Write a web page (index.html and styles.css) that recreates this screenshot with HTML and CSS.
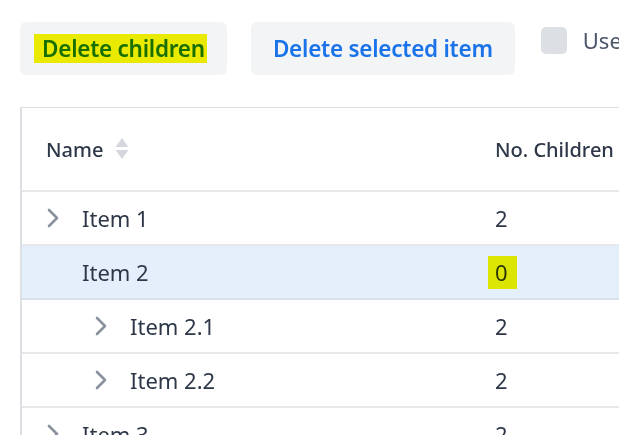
FILE: index.html
```html
<!DOCTYPE html>
<html>
<head>
<meta charset="utf-8">
<link rel="stylesheet" href="styles.css">
</head>
<body>
<div class="page">
  <div class="toolbar">
    <button class="btn"><span class="hl hl-btn">Delete children</span></button>
    <button class="btn">Delete selected item</button>
    <label class="check"><span class="box"></span><span class="check-label">Use checkboxes</span></label>
  </div>
  <div class="table">
    <div class="row head">
      <div class="cell c1">Name
        <svg class="sort" width="14" height="22" viewBox="0 0 14 22"><path d="M7 0 L13.5 9 L0.5 9 Z" fill="#d4d8de"/><path d="M0.5 12 L13.5 12 L7 21 Z" fill="#d4d8de"/></svg>
      </div>
      <div class="cell c2">No. Children</div>
    </div>
    <div class="row">
      <div class="cell c1 lvl0"><svg class="chev" width="14" height="22" viewBox="0 0 14 22"><path d="M3 3 L11 11 L3 19" fill="none" stroke="#8a929e" stroke-width="2.6" stroke-linecap="round" stroke-linejoin="round"/></svg>Item 1</div>
      <div class="cell c2">2</div>
    </div>
    <div class="row selected">
      <div class="cell c1 lvl0"><span class="chev-space"></span>Item 2</div>
      <div class="cell c2"><span class="hl hl-num">0</span></div>
    </div>
    <div class="row">
      <div class="cell c1 lvl1"><svg class="chev" width="14" height="22" viewBox="0 0 14 22"><path d="M3 3 L11 11 L3 19" fill="none" stroke="#8a929e" stroke-width="2.6" stroke-linecap="round" stroke-linejoin="round"/></svg>Item 2.1</div>
      <div class="cell c2">2</div>
    </div>
    <div class="row">
      <div class="cell c1 lvl1"><svg class="chev" width="14" height="22" viewBox="0 0 14 22"><path d="M3 3 L11 11 L3 19" fill="none" stroke="#8a929e" stroke-width="2.6" stroke-linecap="round" stroke-linejoin="round"/></svg>Item 2.2</div>
      <div class="cell c2">2</div>
    </div>
    <div class="row">
      <div class="cell c1 lvl0"><svg class="chev" width="14" height="22" viewBox="0 0 14 22"><path d="M3 3 L11 11 L3 19" fill="none" stroke="#8a929e" stroke-width="2.6" stroke-linecap="round" stroke-linejoin="round"/></svg>Item 3</div>
      <div class="cell c2">2</div>
    </div>
  </div>
</div>
</body>
</html>
```

FILE: styles.css
```css
html, body {
  margin: 0;
  padding: 0;
  background: #ffffff;
  overflow: hidden;
}
body {
  width: 619px;
  height: 435px;
  font-family: "Noto Sans", "Open Sans", sans-serif;
  color: #2d3748;
}
.page {
  padding: 22px 0 0 20px;
  width: 760px;
}
.toolbar {
  display: flex;
  align-items: flex-start;
  gap: 24px;
  white-space: nowrap;
}
.btn {
  height: 53px;
  padding: 0 22px;
  border: none;
  border-radius: 6px;
  background: #f3f4f6;
  color: #1a73e8;
  font-family: inherit;
  font-size: 22.5px;
  font-weight: 600;
  letter-spacing: -0.25px;
  line-height: 53px;
}
.check {
  display: flex;
  align-items: center;
  gap: 16px;
  margin-left: 2px;
  margin-top: 3px;
  font-size: 22px;
  color: #4a5568;
}
.box {
  width: 26px;
  height: 27px;
  border-radius: 5px;
  background: #dcdfe4;
}
.hl {
  position: relative;
}
.hl::after {
  content: "";
  position: absolute;
  background: #f5f500;
  mix-blend-mode: multiply;
}
.hl-btn::after {
  left: -8px;
  right: -2px;
  top: 1px;
  bottom: 1px;
}
.hl-num::after {
  left: -7px;
  right: -9px;
  top: -1px;
  bottom: -2px;
}
.table {
  margin-top: 32px;
  border-top: 1px solid #dcdfe4;
  border-left: 2px solid #dcdfe4;
  width: 740px;
}
.row {
  display: flex;
  height: 52px;
  align-items: center;
  border-bottom: 2px solid #e6e8ec;
  font-size: 22px;
}
.row.head {
  height: 82px;
  font-size: 20px;
  font-weight: 500;
}
.row.selected {
  background: #e5effc;
  border-bottom-color: #d8e0ea;
}
.cell {
  display: flex;
  align-items: center;
}
.c1 {
  width: 447px;
  padding-left: 24px;
  box-sizing: border-box;
}
.c2 {
  padding-left: 26px;
}
.sort {
  margin-left: 12px;
}
.chev {
  margin-left: 0;
  margin-right: 22px;
  flex: none;
}
.chev-space {
  width: 36px;
  flex: none;
}
.lvl1 {
  padding-left: 72px;
}
```
